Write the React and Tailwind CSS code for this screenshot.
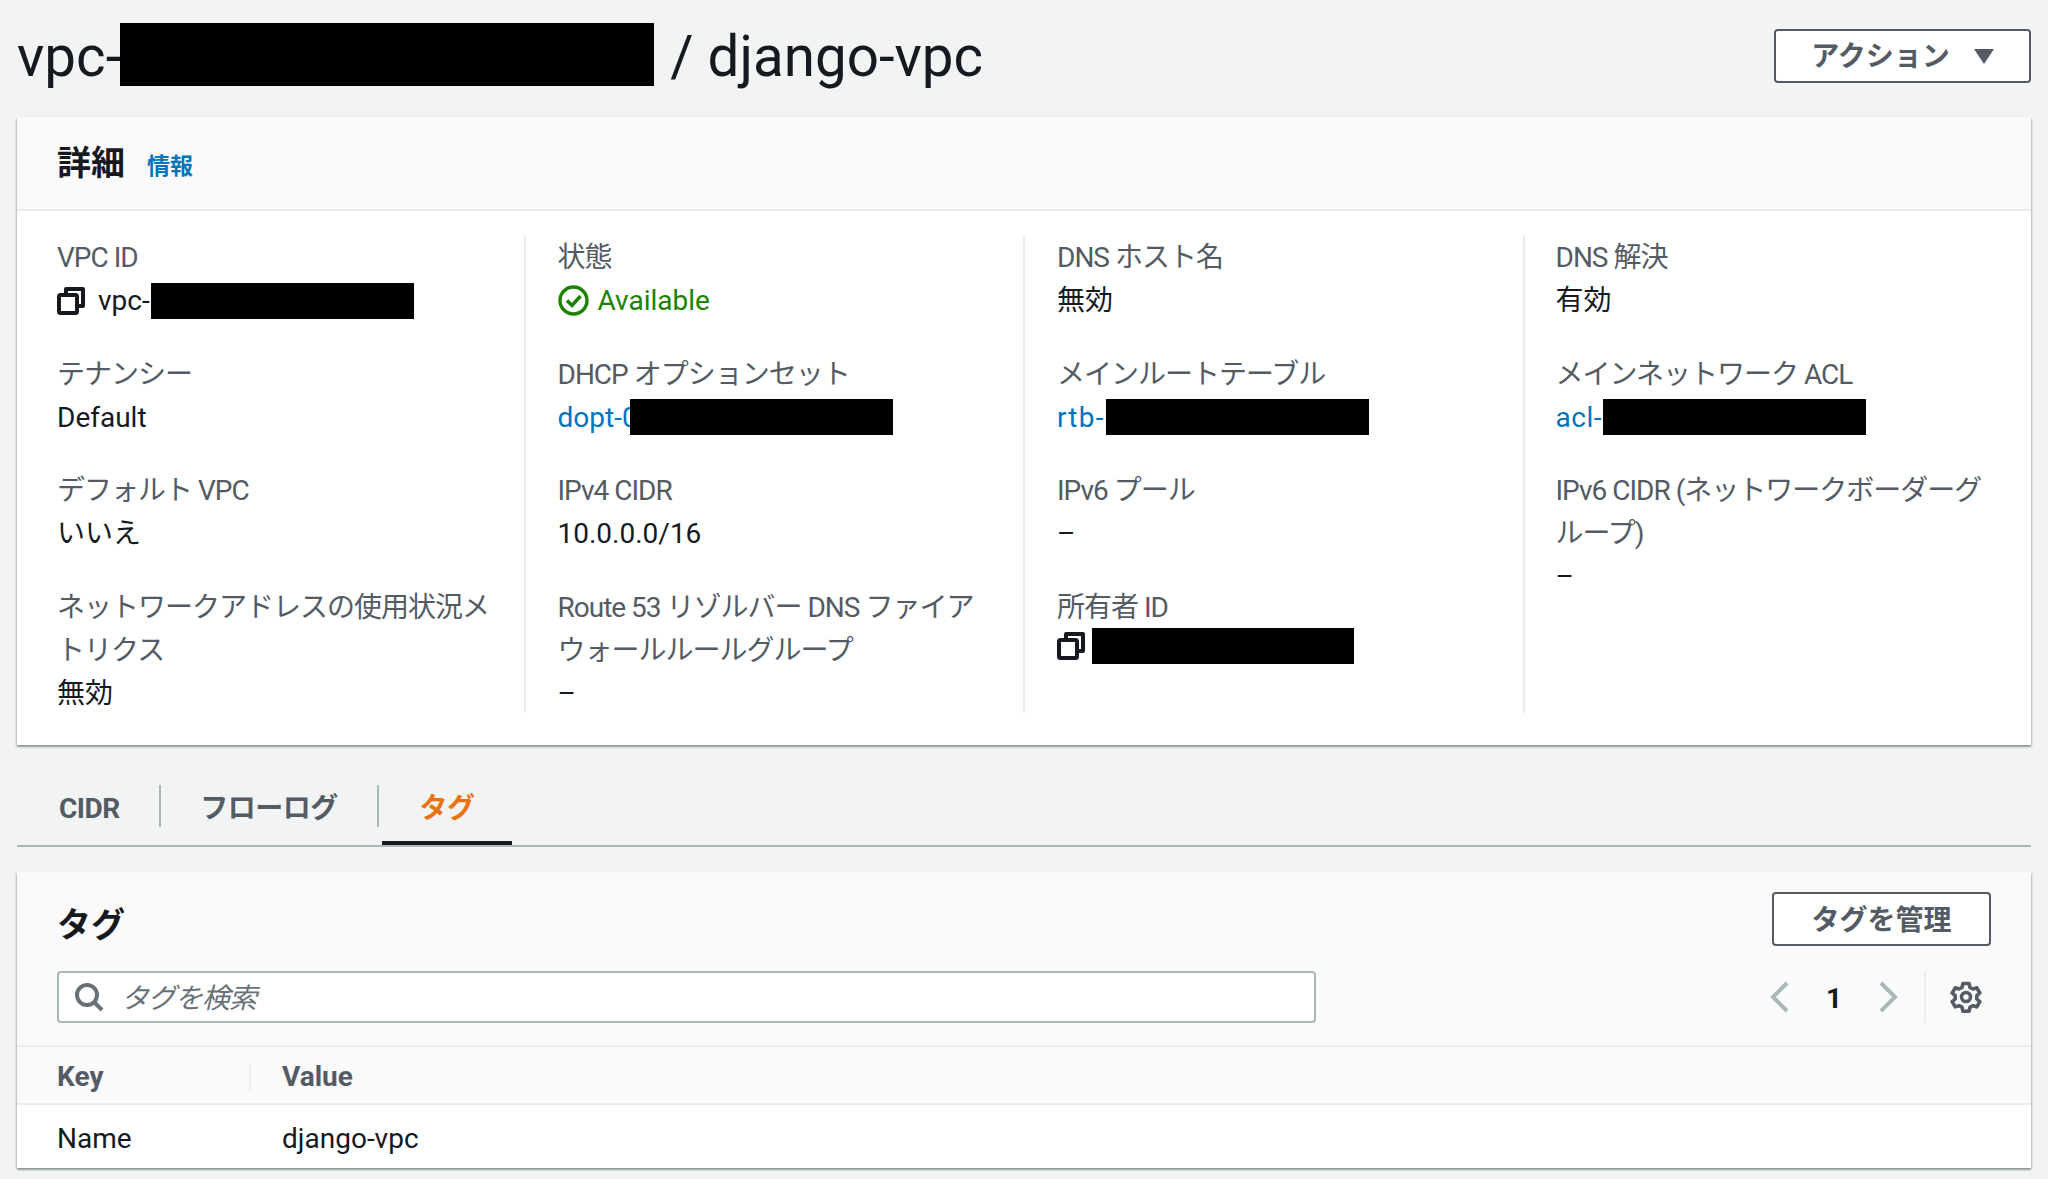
const FONT = "font-['Roboto','Noto_Sans_CJK_JP',sans-serif]";

function CopyIcon() {
  return (
    <svg className="w-[28px] h-[28px] shrink-0" viewBox="0 0 28 28" fill="none" stroke="#16191f" strokeWidth="4">
      <rect x="2" y="8" width="18" height="18" rx="1.5" />
      <path d="M9 7V2h17v17h-5" strokeLinejoin="round" />
    </svg>
  );
}

function CheckIcon() {
  return (
    <svg className="w-[31px] h-[31px] shrink-0" viewBox="0 0 31 31" fill="none" stroke="#1d8102" strokeWidth="3.4">
      <circle cx="15.5" cy="15.5" r="13.5" />
      <path d="M9 15.5l5 5 8.5-9.5" strokeWidth="3.6" />
    </svg>
  );
}

function Redact({ className }) {
  return <span className={`inline-block bg-black h-[36px] ${className}`} />;
}

function Label({ children }) {
  return <div className="text-[#545b64] tracking-[-1px]">{children}</div>;
}

function Field({ label, children }) {
  return (
    <div>
      <Label>{label}</Label>
      <div className="text-[#16191f]">{children}</div>
    </div>
  );
}

function RedactedRow({ prefix, shift, spacing }) {
  return (
    <div className={`flex items-center h-[43px] text-[#0073bb] ${spacing}`}>
      {prefix}
      <Redact className={`w-[263px] ${shift}`} />
    </div>
  );
}

export default function App() {
  return (
    <div className={`${FONT} min-h-[1179px] bg-[#f2f3f3] px-[17px] text-[28px] leading-[43px] overflow-hidden`}>
      {/* title */}
      <div className="h-[117px] pt-[23px] flex items-start justify-between">
        <h1 className="flex items-start text-[56.5px] leading-[63px] text-[#16191f] font-normal">
          <span className="mt-[3px]">vpc-</span>
          <span className="inline-block bg-black w-[534px] h-[63px] -ml-[1px]" />
          <span className="ml-[16px] mt-[3px]">/ django-vpc</span>
        </h1>
        <button className="mt-[6px] w-[257px] h-[54px] bg-white border-2 border-[#545b64] rounded-[4px] flex items-center justify-center gap-[24px] font-bold text-[#545b64]">
          アクション
          <svg className="w-[20px] h-[15px]" viewBox="0 0 20 15">
            <path d="M0 0h20L10 15z" fill="#545b64" />
          </svg>
        </button>
      </div>

      {/* details */}
      <div className="bg-white shadow-[0_2px_2px_0_rgba(0,28,36,0.3),1px_1px_2px_0_rgba(0,28,36,0.15),-1px_1px_2px_0_rgba(0,28,36,0.15)] pb-[32px]">
        <div className="h-[94px] bg-[#fafafa] border-b-2 border-[#eaeded] pl-[40px] flex items-center gap-[22px]">
          <h2 className="text-[34px] font-bold text-[#16191f] leading-none">詳細</h2>
          <a className="text-[23px] font-bold text-[#0073bb] leading-none mt-[6px]">情報</a>
        </div>
        <div className="grid grid-cols-4 grid-rows-[478px] w-[1998px] ml-[9px] mt-[24px]">
          <div className="pt-[1px] pl-[31px] pr-[30px] border-r-2 border-[#eaeded] flex flex-col gap-[30.67px]">
            <div>
              <Label>VPC ID</Label>
              <div className="flex items-center h-[43px] text-[#16191f]">
                <CopyIcon />
                <span className="ml-[13px]">vpc-</span>
                <Redact className="w-[263px] ml-[1px]" />
              </div>
            </div>
            <Field label="テナンシー">Default</Field>
            <Field label="デフォルト VPC">いいえ</Field>
            <Field label="ネットワークアドレスの使用状況メトリクス">無効</Field>
          </div>

          <div className="pt-[1px] pl-[32px] pr-[28px] border-r-2 border-[#eaeded] flex flex-col gap-[30.67px]">
            <div>
              <Label>状態</Label>
              <div className="flex items-center gap-[9px] h-[43px] text-[#1d8102]">
                <CheckIcon />
                Available
              </div>
            </div>
            <div>
              <Label>DHCP オプションセット</Label>
              <RedactedRow prefix="dopt-0" shift="-ml-[8px]" spacing="" />
            </div>
            <Field label="IPv4 CIDR">10.0.0.0/16</Field>
            <Field label="Route 53 リゾルバー DNS ファイアウォールルールグループ">–</Field>
          </div>

          <div className="pt-[1px] pl-[32px] pr-[24px] border-r-2 border-[#eaeded] flex flex-col gap-[30.67px]">
            <Field label="DNS ホスト名">無効</Field>
            <div>
              <Label>メインルートテーブル</Label>
              <RedactedRow prefix="rtb-" shift="ml-[1px]" spacing="tracking-[1.2px]" />
            </div>
            <Field label="IPv6 プール">–</Field>
            <div>
              <Label>所有者 ID</Label>
              <div className="flex items-center h-[43px] -mt-[4px]">
                <CopyIcon />
                <Redact className="w-[262px] ml-[7px]" />
              </div>
            </div>
          </div>

          <div className="pt-[1px] pl-[31px] pr-[24px] flex flex-col gap-[30.67px]">
            <Field label="DNS 解決">有効</Field>
            <div>
              <Label>メインネットワーク ACL</Label>
              <RedactedRow prefix="acl-" shift="ml-[1px]" spacing="tracking-[0.5px]" />
            </div>
            <Field label="IPv6 CIDR (ネットワークボーダーグループ)">–</Field>
          </div>
        </div>
      </div>

      {/* tabs */}
      <div className="h-[102px] pt-[40px] flex items-start border-b-2 border-[#aab7b8] font-bold tracking-[-0.5px]">
        <div className="w-[144px] h-[42px] pt-[4px] pl-[42px] border-r-2 border-[#aab7b8] flex items-center text-[#545b64]">CIDR</div>
        <div className="w-[218px] h-[42px] pt-[4px] border-r-2 border-[#aab7b8] flex items-center justify-center text-[#545b64]">フローログ</div>
        <div className="ml-[3px] w-[130px] h-[60px] flex items-start justify-center border-b-4 border-[#16191f] text-[#ec7211]">
          <span className="h-[42px] pt-[4px] flex items-center">タグ</span>
        </div>
      </div>

      {/* tags */}
      <div className="mt-[25px] bg-white shadow-[0_2px_2px_0_rgba(0,28,36,0.3),1px_1px_2px_0_rgba(0,28,36,0.15),-1px_1px_2px_0_rgba(0,28,36,0.15)]">
        <div className="bg-[#fafafa] pt-[20px] pb-[22px] pl-[40px] pr-[40px]">
          <div className="flex items-center justify-between h-[54px]">
            <h2 className="mt-[12px] text-[34px] font-bold text-[#16191f] leading-none">タグ</h2>
            <button className="w-[219px] h-[54px] pt-[2px] bg-white border-2 border-[#545b64] rounded-[4px] font-bold text-[#545b64]">タグを管理</button>
          </div>
          <div className="flex items-center mt-[25px] h-[52px]">
            <div className="w-[1259px] h-[52px] bg-white border-2 border-[#aab7b8] rounded-[4px] flex items-center pl-[15px] gap-[17px]">
              <svg className="w-[30px] h-[30px] shrink-0" viewBox="0 0 30 30" fill="none" stroke="#687078" strokeWidth="4">
                <circle cx="13" cy="13" r="10" />
                <path d="M20 20l8 8" />
              </svg>
              <span className="italic text-[#687078] tracking-[-1px] mt-[3px]">タグを検索</span>
            </div>
            <div className="ml-auto mr-[9px] flex items-center h-[52px]">
              <svg className="w-[20px] h-[32px]" viewBox="0 0 20 32" fill="none" stroke="#aab7b8" strokeWidth="4">
                <path d="M17 2L3 16l14 14" />
              </svg>
              <span className="w-[88px] mt-[3px] text-center font-bold text-[#16191f]">1</span>
              <svg className="w-[20px] h-[32px]" viewBox="0 0 20 32" fill="none" stroke="#aab7b8" strokeWidth="4">
                <path d="M3 2l14 14L3 30" />
              </svg>
              <div className="ml-[26px] h-[52px] border-l-2 border-[#eaeded]" />
              <svg className="ml-[24px] w-[32px] h-[32px]" viewBox="0 0 32 32" fill="none" stroke="#545b64" strokeWidth="3.6" strokeLinejoin="round">
                <circle cx="16" cy="16" r="4.500" />
                <path d="M13 2.500h6l1 4 3 1.500 3.800-1.200 3 5.200-3 2.700v3.300l3 2.700-3 5.200-3.800-1.200-3 1.500-1 4h-6l-1-4-3-1.500-3.800 1.200-3-5.200 3-2.700v-3.300l-3-2.700 3-5.200 3.800 1.200 3-1.500z" />
              </svg>
            </div>
          </div>
        </div>
        <div className="h-[60px] pt-[3px] bg-[#fafafa] border-y-2 border-[#eaeded] flex items-center font-bold text-[#545b64]">
          <div className="w-[234px] pl-[40px] h-[28px] border-r-2 border-[#eaeded] flex items-center">Key</div>
          <div className="pl-[31px]">Value</div>
        </div>
        <div className="h-[63px] pt-[3px] flex items-center text-[#16191f]">
          <div className="w-[234px] pl-[40px]">Name</div>
          <div className="pl-[31px]">django-vpc</div>
        </div>
      </div>
    </div>
  );
}
